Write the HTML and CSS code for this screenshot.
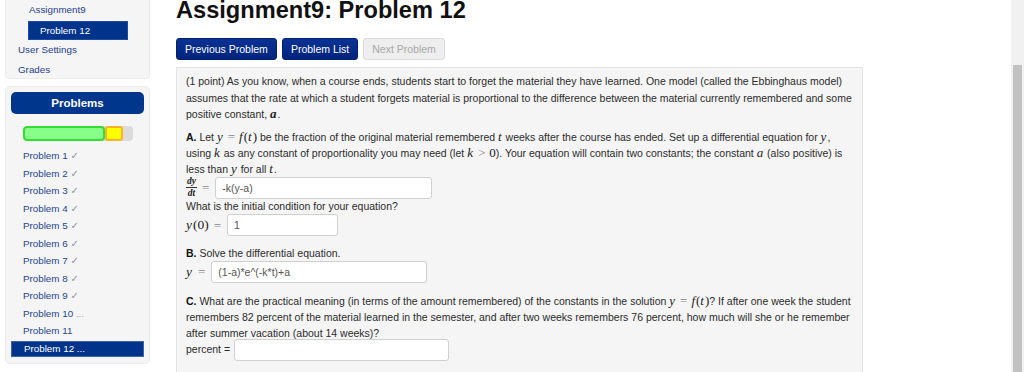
FILE: index.html
```html
<!DOCTYPE html>
<html lang="en">
<head>
    <meta charset="UTF-8">
    <title>Assignment9: Problem 12</title>
    <link rel="stylesheet" href="styles.css">
</head>
<body>
    <div class="page">
        <aside class="sidebar">
            <nav class="site-nav">
                <a class="nav-set" href="#">Assignment9</a>
                <a class="nav-problem" href="#">Problem 12</a>
                <a class="nav-link" href="#">User Settings</a>
                <a class="nav-link" href="#">Grades</a>
            </nav>

            <div class="problems-panel">
                <div class="panel-head">Problems</div>
                <div class="progress">
                    <span class="prog-correct" style="width: 82px"></span>
                    <span class="prog-partial" style="width: 18px"></span>
                </div>
                <ul class="problem-list">
                    <li>Problem 1 <span class="mark">&#10003;</span></li>
                    <li>Problem 2 <span class="mark">&#10003;</span></li>
                    <li>Problem 3 <span class="mark">&#10003;</span></li>
                    <li>Problem 4 <span class="mark">&#10003;</span></li>
                    <li>Problem 5 <span class="mark">&#10003;</span></li>
                    <li>Problem 6 <span class="mark">&#10003;</span></li>
                    <li>Problem 7 <span class="mark">&#10003;</span></li>
                    <li>Problem 8 <span class="mark">&#10003;</span></li>
                    <li>Problem 9 <span class="mark">&#10003;</span></li>
                    <li>Problem 10 <span class="dots">...</span></li>
                    <li>Problem 11</li>
                    <li class="current">Problem 12 ...</li>
                </ul>
            </div>
        </aside>

        <main class="content">
            <h1>Assignment9: Problem 12</h1>

            <div class="nav-buttons">
                <button class="btn">Previous Problem</button>
                <button class="btn">Problem List</button>
                <button class="btn disabled" disabled>Next Problem</button>
            </div>

            <div class="problem">
                <p class="intro">(1 point) As you know, when a course ends, students start to forget the material they have learned. One model (called the Ebbinghaus model) assumes that the rate at which a student forgets material is proportional to the difference between the material currently remembered and some positive constant, <span class="mi bold">a</span>.</p>

                <p class="part part-a"><b>A.</b> Let <span class="mi">y</span><span class="mo">=</span><span class="mi">f</span><span class="mn">(</span><span class="mi">t</span><span class="mn">)</span> be the fraction of the original material remembered <span class="mi">t</span> weeks after the course has ended. Set up a differential equation for <span class="mi">y</span>, using <span class="mi">k</span> as any constant of proportionality you may need (let <span class="mi">k</span><span class="mo">&gt;</span><span class="mn">0</span>). Your equation will contain two constants; the constant <span class="mi">a</span> (also positive) is less than <span class="mi">y</span> for all <span class="mi">t</span>.</p>

                <div class="answer-row row-deriv">
                    <span class="frac"><span class="num">dy</span><span class="den">dt</span></span>
                    <span class="mo eq">=</span>
                    <span class="answer w-deriv">-k(y-a)</span>
                </div>

                <p class="question">What is the initial condition for your equation?</p>

                <div class="answer-row row-init">
                    <span class="mi big">y</span><span class="mn big">(0)</span>
                    <span class="mo eq">=</span>
                    <span class="answer w-init">1</span>
                </div>

                <p class="part part-b"><b>B.</b> Solve the differential equation.</p>

                <div class="answer-row row-solve">
                    <span class="mi big">y</span>
                    <span class="mo eq">=</span>
                    <span class="answer w-solve">(1-a)*e^(-k*t)+a</span>
                </div>

                <p class="part part-c"><b>C.</b> What are the practical meaning (in terms of the amount remembered) of the constants in the solution <span class="mi">y</span><span class="mo">=</span><span class="mi">f</span><span class="mn">(</span><span class="mi">t</span><span class="mn">)</span>? If after one week the student remembers 82 percent of the material learned in the semester, and after two weeks remembers 76 percent, how much will she or he remember after summer vacation (about 14 weeks)?</p>

                <div class="answer-row row-percent">
                    <span class="label">percent =</span>
                    <span class="answer w-percent"></span>
                </div>
            </div>
        </main>
    </div>

    <div class="scrollbar"><div class="scroll-thumb"></div></div>
</body>
</html>
```

FILE: styles.css
```css
* {
    margin: 0;
    padding: 0;
    box-sizing: border-box;
}
html, body {
    height: 100%;
    overflow: hidden;
}
body {
    font-family: "Liberation Sans", Arial, sans-serif;
    background-color: #fff;
    color: #333;
}
a {
    text-decoration: none;
}
.page {
    display: flex;
    gap: 26px;
    padding-left: 5px;
}

/* sidebar */
.sidebar {
    width: 145px;
    flex-shrink: 0;
}
.site-nav {
    background: #f5f5f5;
    border: 1px solid #ececec;
    border-top: none;
    border-radius: 0 0 4px 4px;
    display: flex;
    flex-direction: column;
    font-size: 9.8px;
    height: 79px;
}
.site-nav a {
    color: #1f3d8c;
    height: 19.5px;
    line-height: 19.5px;
    padding-left: 12px;
}
.site-nav .nav-set {
    padding-left: 23px;
    height: 20px;
    line-height: 20px;
}
.site-nav .nav-problem {
    background: #00338a;
    color: #fff;
    margin-left: 22px;
    width: 100px;
    height: 19px;
    line-height: 17px;
    margin-top: 1px;
    border: 1px solid #1d4d9e;
    padding-left: 11px;
}
.problems-panel {
    margin-top: 7px;
    background: #f5f5f5;
    border: 1px solid #ececec;
    border-radius: 5px;
    padding: 5px 5px 6px 5px;
}
.panel-head {
    background: #00368b;
    color: #fff;
    font-weight: bold;
    font-size: 11.5px;
    text-align: center;
    height: 22px;
    line-height: 22px;
    border-radius: 5px;
}
.progress {
    display: flex;
    margin: 12px 0 0 12px;
    width: 110px;
    height: 15px;
    background: #dcdcdc;
    border-radius: 4px;
    overflow: hidden;
}
.prog-correct {
    background: #88ff88;
    border: 2px solid #33dd33;
    border-radius: 4px;
}
.prog-partial {
    background: #ffff00;
    border: 2px solid #ffb12a;
    border-radius: 3px;
}
.problem-list {
    list-style: none;
    margin-top: 6px;
    font-size: 9.8px;
}
.problem-list li {
    color: #24468f;
    height: 17.5px;
    line-height: 17.5px;
    padding-left: 12px;
    overflow: hidden;
}
.problem-list .mark {
    color: #8d93a8;
    font-family: "DejaVu Sans", sans-serif;
    font-size: 10px;
    line-height: 1;
}
.problem-list .dots {
    color: #9aa3bd;
}
.problem-list li.current {
    background: #00338a;
    color: #fff;
    border: 1px solid #3b62aa;
    height: 16px;
    line-height: 14px;
    margin-top: 1px;
}

/* main content */
.content {
    width: 687px;
}
h1 {
    font-size: 23.6px;
    font-weight: bold;
    color: #111;
    line-height: 28px;
    margin-top: -4px;
    margin-bottom: 14px;
}
.nav-buttons {
    display: flex;
    gap: 5px;
}
.btn {
    font-family: "Liberation Sans", Arial, sans-serif;
    font-size: 10.5px;
    height: 22px;
    padding: 0 8px;
    color: #fff;
    background: linear-gradient(#0a3294, #00247c);
    border: 1px solid #00226c;
    border-radius: 3px;
}
.btn.disabled {
    background: #eeeeee;
    border-color: #dcdcdc;
    color: #a8a8a8;
}
.problem {
    margin-top: 7px;
    background: #f5f5f5;
    border: 1px solid #e3e3e3;
    padding: 5px 4px 40px 9px;
    font-size: 10.5px;
    line-height: 16.5px;
    color: #2b2b2b;
}
.problem b {
    color: #111;
}
.part-a {
    margin-top: 6px;
    line-height: 16px;
}
.part-b {
    margin-top: 9px;
}
.part-c {
    margin-top: 10px;
    line-height: 16px;
}
.question {
    margin-top: -1px;
}

/* math */
.mi, .mn, .mo {
    font-family: "Liberation Serif", "Times New Roman", serif;
    font-size: 13px;
    line-height: 1;
    color: #222;
}
.mi {
    font-style: italic;
    padding-right: 1px;
}
.mi.bold {
    font-weight: bold;
}
.mo {
    color: #888;
    margin: 0 4px;
}
.big {
    font-size: 13.5px;
}
.mo.eq {
    margin: 0 6px 0 5px;
}
.frac {
    display: inline-flex;
    flex-direction: column;
    align-items: center;
    font-family: "Liberation Serif", "Times New Roman", serif;
    font-style: italic;
    font-weight: bold;
    font-size: 9.5px;
    line-height: 9px;
    color: #222;
}
.frac .num {
    border-bottom: 1px solid #333;
    padding: 0 1px 1px;
}
.frac .den {
    padding-top: 1px;
}

/* answer rows */
.answer-row {
    display: flex;
    align-items: center;
    height: 22px;
}
.row-solve {
    margin-top: -1px;
}
.row-percent {
    margin-top: -2px;
}
.answer {
    display: inline-block;
    height: 22px;
    line-height: 20px;
    background: #fff;
    border: 1px solid #d0d0d0;
    border-radius: 3px;
    padding-left: 6px;
    color: #555;
    font-size: 10.5px;
}
.w-deriv { width: 217px; }
.w-init { width: 111px; }
.w-solve { width: 216px; }
.w-percent { width: 215px; }
.label {
    margin-right: 4px;
}

/* fake window scrollbar */
.scrollbar {
    position: fixed;
    top: 0;
    right: 0;
    width: 13px;
    height: 100%;
    background: #f1f1f1;
}
.scroll-thumb {
    position: absolute;
    top: 65px;
    left: 2px;
    width: 9px;
    bottom: 0;
    background: #c1c1c1;
}
```
